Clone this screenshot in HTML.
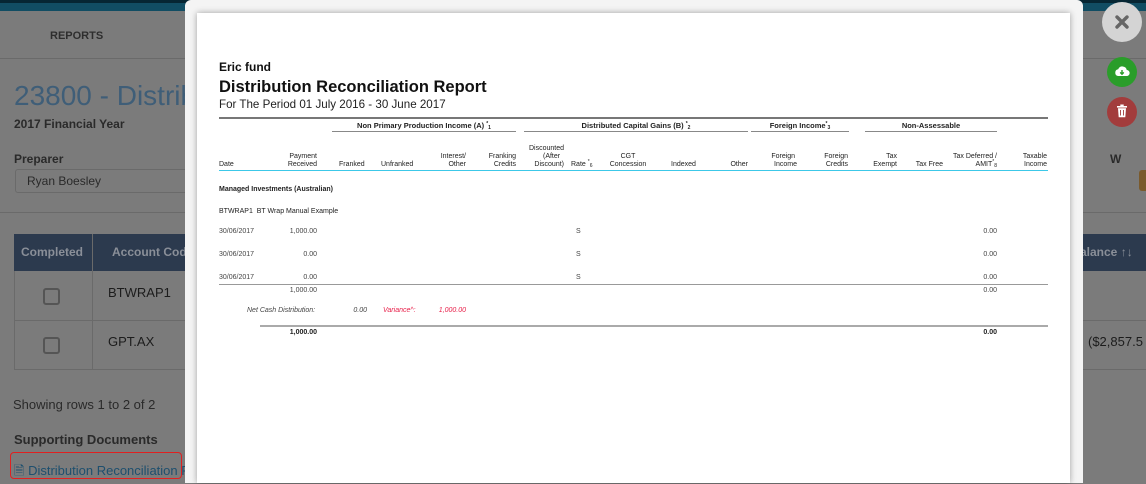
<!DOCTYPE html>
<html><head><meta charset="utf-8">
<style>
*{margin:0;padding:0;box-sizing:border-box}
body{width:1146px;height:483px;overflow:hidden;background:#7b7b7b;font-family:"Liberation Sans",sans-serif;position:relative}
.a{position:absolute;white-space:nowrap}
.t{font-size:7px;color:#222;line-height:8px}
.b{font-weight:bold}
.r{text-align:right}
.c{text-align:center}
.s{font-size:5px;position:relative;top:-3px}
.s2{font-size:5px;position:relative;top:1px}
.hl{position:absolute;height:1px;background:#888}
</style></head><body>
<div class="a" style="left:0;top:0;width:1146px;height:3px;background:#062633"></div>
<div class="a" style="left:0;top:3px;width:1146px;height:8px;background:#114d63"></div>
<div class="a" style="left:50px;top:30px;font-size:11px;font-weight:bold;color:#2e2e2e">REPORTS</div>
<div class="a" style="left:0;top:58px;width:1146px;height:1px;background:#6a6a6a"></div>
<div class="a" style="left:14px;top:80px;font-size:28px;color:#3f5e78;font-weight:300">23800 - Distrib</div>
<div class="a" style="left:14px;top:117px;font-size:12px;font-weight:bold;color:#2a2a2a">2017 Financial Year</div>
<div class="a" style="left:14px;top:152px;font-size:12px;font-weight:bold;color:#2a2a2a">Preparer</div>
<div class="a" style="left:15px;top:169px;width:180px;height:24px;border:1px solid #6a6a6a;border-radius:3px;padding:4px 11px;font-size:12px;color:#2a2a2a">Ryan Boesley</div>
<div class="a" style="left:1110px;top:152px;font-size:12px;font-weight:bold;color:#2a2a2a">W</div>
<div class="a" style="left:1139px;top:170px;width:12px;height:21px;background:#7a5a2c;border-radius:3px"></div>
<div class="a" style="left:0;top:212px;width:1146px;height:1px;background:#6a6a6a"></div>
<div class="a" style="left:14px;top:234px;width:1140px;height:37px;background:#2c3a4e"></div>
<div class="a" style="left:21px;top:245px;font-size:12px;font-weight:bold;color:#8a8f98">Completed</div>
<div class="a" style="left:112px;top:245px;font-size:12px;font-weight:bold;color:#8a8f98">Account Code</div>
<div class="a" style="left:1080px;top:245px;font-size:12px;font-weight:bold;color:#8a8f98">alance ↑↓</div>
<div class="a" style="left:92px;top:234px;width:1px;height:136px;background:#6a6a6a"></div>
<div class="a" style="left:14px;top:271px;width:1px;height:99px;background:#6a6a6a"></div>
<div class="a" style="left:14px;top:320px;width:1140px;height:1px;background:#6a6a6a"></div>
<div class="a" style="left:14px;top:369px;width:1140px;height:1px;background:#6a6a6a"></div>
<div class="a" style="left:43px;top:288px;width:17px;height:17px;border:2px solid #555;border-radius:3px"></div>
<div class="a" style="left:43px;top:337px;width:17px;height:17px;border:2px solid #555;border-radius:3px"></div>
<div class="a" style="left:108px;top:285px;font-size:13px;color:#1c1c1c">BTWRAP1</div>
<div class="a" style="left:108px;top:334px;font-size:13px;color:#1c1c1c">GPT.AX</div>
<div class="a" style="left:1088px;top:334px;font-size:13px;color:#1c1c1c">($2,857.5</div>
<div class="a" style="left:13px;top:397px;font-size:13px;color:#2a2a2a">Showing rows 1 to 2 of 2</div>
<div class="a" style="left:14px;top:432px;font-size:13px;font-weight:bold;color:#2a2a2a">Supporting Documents</div>
<div class="a" style="left:10px;top:452px;width:172px;height:27px;border:1px solid #e02020;border-radius:4px"></div>
<div class="a" style="left:14px;top:462px;font-size:13px;color:#1e4f6e">&#128462; Distribution Reconciliation R</div>
<!-- modal -->
<div class="a" style="left:185px;top:0;width:898px;height:483px;background:#f4f4f4;border-radius:6px 6px 0 0"></div>
<div class="a" style="left:197px;top:13px;width:873px;height:470px;background:#fff;box-shadow:0 0 6px rgba(0,0,0,.35)"></div>
<div class="a" style="left:219px;top:60px;font-size:12px;font-weight:bold;color:#111">Eric fund</div>
<div class="a" style="left:219px;top:78px;font-size:16.5px;font-weight:bold;color:#111">Distribution Reconciliation Report</div>
<div class="a" style="left:219px;top:98px;font-size:11.6px;color:#222">For The Period 01 July 2016 - 30 June 2017</div>
<div class="hl" style="left:219px;top:117px;width:829px;height:2px;background:#777"></div>
<div class="a t b c" style="left:332px;top:122px;width:184px;font-size:7.5px">Non Primary Production Income (A) <span class="s">*</span><span class="s2">1</span></div>
<div class="a t b c" style="left:524px;top:122px;width:224px;font-size:7.5px">Distributed Capital Gains (B) <span class="s">*</span><span class="s2">2</span></div>
<div class="a t b c" style="left:751px;top:122px;width:98px;font-size:7.5px">Foreign Income<span class="s">*</span><span class="s2">3</span></div>
<div class="a t b c" style="left:865px;top:122px;width:132px;font-size:7.5px">Non-Assessable</div>
<div class="hl" style="left:332px;top:131px;width:184px"></div>
<div class="hl" style="left:524px;top:131px;width:224px"></div>
<div class="hl" style="left:751px;top:131px;width:98px"></div>
<div class="hl" style="left:865px;top:131px;width:132px"></div>
<div class="a t" style="left:219px;top:161px">Date</div>
<div class="a t r" style="left:257px;top:153px;width:60px">Payment<br>Received</div>
<div class="a t" style="left:339px;top:161px">Franked</div>
<div class="a t" style="left:381px;top:161px">Unfranked</div>
<div class="a t r" style="left:416px;top:153px;width:50px">Interest/<br>Other</div>
<div class="a t r" style="left:466px;top:153px;width:50px">Franking<br>Credits</div>
<div class="a t" style="left:504px;top:145px;width:60px;text-align:right">Discounted<br>(After&nbsp;&nbsp;<br>Discount)</div>
<div class="a t" style="left:571px;top:161px">Rate <span class="s">*</span><span class="s2">6</span></div>
<div class="a t c" style="left:602px;top:153px;width:52px">CGT<br>Concession</div>
<div class="a t" style="left:671px;top:161px">Indexed</div>
<div class="a t r" style="left:708px;top:161px;width:40px">Other</div>
<div class="a t" style="left:747px;top:153px;width:50px;text-align:right">Foreign&nbsp;<br>Income</div>
<div class="a t" style="left:798px;top:153px;width:50px;text-align:right">Foreign<br>Credits</div>
<div class="a t r" style="left:857px;top:153px;width:40px">Tax<br>Exempt</div>
<div class="a t r" style="left:903px;top:161px;width:40px">Tax Free</div>
<div class="a t r" style="left:927px;top:153px;width:70px">Tax Deferred /<br>AMIT<span class="s">*</span><span class="s2">8</span></div>
<div class="a t r" style="left:1007px;top:153px;width:40px">Taxable<br>Income</div>
<div class="hl" style="left:219px;top:170px;width:829px;background:#3cc8e8"></div>
<div class="a t b" style="left:219px;top:186px">Managed Investments (Australian)</div>
<div class="a t" style="left:219px;top:208px">BTWRAP1 &nbsp;BT Wrap Manual Example</div>
<div class="a t" style="left:219px;top:228px;color:#444">30/06/2017</div>
<div class="a t r" style="left:257px;top:228px;width:60px;color:#444">1,000.00</div>
<div class="a t" style="left:576px;top:228px;color:#444">S</div>
<div class="a t r" style="left:957px;top:228px;width:40px;color:#444">0.00</div>
<div class="a t" style="left:219px;top:251px;color:#444">30/06/2017</div>
<div class="a t r" style="left:257px;top:251px;width:60px;color:#444">0.00</div>
<div class="a t" style="left:576px;top:251px;color:#444">S</div>
<div class="a t r" style="left:957px;top:251px;width:40px;color:#444">0.00</div>
<div class="a t" style="left:219px;top:274px;color:#444">30/06/2017</div>
<div class="a t r" style="left:257px;top:274px;width:60px;color:#444">0.00</div>
<div class="a t" style="left:576px;top:274px;color:#444">S</div>
<div class="a t r" style="left:957px;top:274px;width:40px;color:#444">0.00</div>
<div class="hl" style="left:219px;top:284px;width:829px;background:#999"></div>
<div class="a t r" style="left:257px;top:287px;width:60px;color:#444">1,000.00</div>
<div class="a t r" style="left:957px;top:287px;width:40px;color:#444">0.00</div>
<div class="a t" style="left:247px;top:307px;font-style:italic;color:#444">Net Cash Distribution:</div>
<div class="a t r" style="left:337px;top:307px;width:30px;font-style:italic;color:#444">0.00</div>
<div class="a t" style="left:383px;top:307px;font-style:italic;color:#e8204a">Variance^:</div>
<div class="a t r" style="left:426px;top:307px;width:40px;font-style:italic;color:#e8204a">1,000.00</div>
<div class="hl" style="left:260px;top:325px;width:788px;height:2px;background:#aaa"></div>
<div class="a t b r" style="left:257px;top:329px;width:60px">1,000.00</div>
<div class="a t b r" style="left:957px;top:329px;width:40px">0.00</div>
<!-- buttons -->
<div class="a" style="left:1102px;top:2px;width:40px;height:40px;border-radius:50%;background:#d4d4d4"></div>
<svg class="a" style="left:1115px;top:15px" width="14" height="14" viewBox="0 0 14 14"><path d="M2 2L12 12M12 2L2 12" stroke="#666" stroke-width="3.4" stroke-linecap="round"/></svg>
<div class="a" style="left:1107px;top:57px;width:30px;height:30px;border-radius:50%;background:#2a9d2a"></div>
<svg class="a" style="left:1114px;top:65px" width="16" height="13" viewBox="0 0 16 13"><path d="M4 11h8.5a3 3 0 0 0 .3-6A4.5 4.5 0 0 0 4.2 4.3 3.4 3.4 0 0 0 4 11z" fill="#fff"/><path d="M8 5v4M6.2 7.4 8 9.2 9.8 7.4" stroke="#2a9d2a" stroke-width="1.4" fill="none"/></svg>
<div class="a" style="left:1107px;top:97px;width:30px;height:30px;border-radius:50%;background:#a23c3c"></div>
<svg class="a" style="left:1116px;top:104px" width="12" height="14" viewBox="0 0 12 14"><rect x="1" y="2" width="10" height="1.6" fill="#fff"/><rect x="4.3" y="0.5" width="3.4" height="2" fill="#fff"/><path d="M2 4.3h8l-.7 9H2.7z" fill="#fff"/><path d="M4.5 6v5.5M7.5 6v5.5" stroke="#a23c3c" stroke-width=".9"/></svg>
</body></html>
